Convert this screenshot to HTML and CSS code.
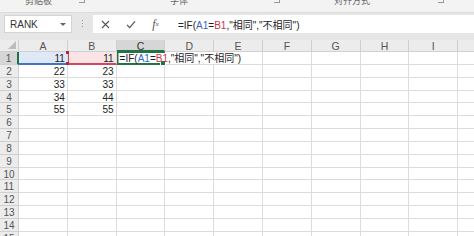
FILE: index.html
```html
<!DOCTYPE html>
<html lang="zh-CN">
<head>
  <meta charset="UTF-8">
  <meta name="viewport" content="width=device-width, initial-scale=1.0">
  <title>IF 相同 / 不相同</title>
  <link rel="stylesheet" href="styles.css">
</head>
<body>
  <div class="ribbon">
    <div class="group g-clip"><span class="label">剪贴板</span><span class="launcher"></span></div>
    <div class="group g-font"><span class="label">字体</span><span class="launcher"></span></div>
    <div class="group g-align"><span class="label">对齐方式</span><span class="launcher"></span></div>
  </div>

  <div class="formula-bar">
    <div class="name-box"><span>RANK</span><span class="arrow"></span></div>
    <div class="grip"><i></i><i></i><i></i></div>
    <div class="input">
      <span class="tool">
        <svg width="9" height="9" viewBox="0 0 9 9"><path d="M1 1L8 8M8 1L1 8" stroke="#555" stroke-width="1.1"/></svg>
      </span>
      <span class="tool">
        <svg width="10" height="9" viewBox="0 0 10 9"><path d="M1 4.8L3.7 7.6L9 1.3" fill="none" stroke="#555" stroke-width="1.2"/></svg>
      </span>
      <span class="tool fx">f<sub>x</sub></span>
      <span class="formula">=IF(<span class="ref-a">A1</span>=<span class="ref-b">B1</span>,"相同","不相同")</span>
    </div>
  </div>

  <div class="sheet">
    <div class="row head">
      <div class="num corner"><svg width="8" height="8" viewBox="0 0 8 8"><path d="M8 0V8H0Z" fill="#bdbdbd"/></svg></div>
      <div class="cell">A</div><div class="cell">B</div><div class="cell sel">C</div><div class="cell">D</div><div class="cell">E</div>
      <div class="cell">F</div><div class="cell">G</div><div class="cell">H</div><div class="cell">I</div><div class="cell">J</div>
    </div>
    <div class="row">
      <div class="num sel">1</div>
      <div class="cell hl-a">11</div><div class="cell hl-b">11</div>
      <div class="cell active"><span class="edit">=IF(<span class="ref-a">A1</span>=<span class="ref-b">B1</span>,"相同","不相同")</span></div>
      <div class="cell spill"></div><div class="cell"></div><div class="cell"></div><div class="cell"></div><div class="cell"></div><div class="cell"></div><div class="cell"></div>
    </div>
    <div class="row">
      <div class="num">2</div>
      <div class="cell">22</div><div class="cell">23</div><div class="cell"></div><div class="cell"></div><div class="cell"></div>
      <div class="cell"></div><div class="cell"></div><div class="cell"></div><div class="cell"></div><div class="cell"></div>
    </div>
    <div class="row">
      <div class="num">3</div>
      <div class="cell">33</div><div class="cell">33</div><div class="cell"></div><div class="cell"></div><div class="cell"></div>
      <div class="cell"></div><div class="cell"></div><div class="cell"></div><div class="cell"></div><div class="cell"></div>
    </div>
    <div class="row">
      <div class="num">4</div>
      <div class="cell">34</div><div class="cell">44</div><div class="cell"></div><div class="cell"></div><div class="cell"></div>
      <div class="cell"></div><div class="cell"></div><div class="cell"></div><div class="cell"></div><div class="cell"></div>
    </div>
    <div class="row">
      <div class="num">5</div>
      <div class="cell">55</div><div class="cell">55</div><div class="cell"></div><div class="cell"></div><div class="cell"></div>
      <div class="cell"></div><div class="cell"></div><div class="cell"></div><div class="cell"></div><div class="cell"></div>
    </div>
    <div class="row">
      <div class="num">6</div>
      <div class="cell"></div><div class="cell"></div><div class="cell"></div><div class="cell"></div><div class="cell"></div>
      <div class="cell"></div><div class="cell"></div><div class="cell"></div><div class="cell"></div><div class="cell"></div>
    </div>
    <div class="row">
      <div class="num">7</div>
      <div class="cell"></div><div class="cell"></div><div class="cell"></div><div class="cell"></div><div class="cell"></div>
      <div class="cell"></div><div class="cell"></div><div class="cell"></div><div class="cell"></div><div class="cell"></div>
    </div>
    <div class="row">
      <div class="num">8</div>
      <div class="cell"></div><div class="cell"></div><div class="cell"></div><div class="cell"></div><div class="cell"></div>
      <div class="cell"></div><div class="cell"></div><div class="cell"></div><div class="cell"></div><div class="cell"></div>
    </div>
    <div class="row">
      <div class="num">9</div>
      <div class="cell"></div><div class="cell"></div><div class="cell"></div><div class="cell"></div><div class="cell"></div>
      <div class="cell"></div><div class="cell"></div><div class="cell"></div><div class="cell"></div><div class="cell"></div>
    </div>
    <div class="row">
      <div class="num">10</div>
      <div class="cell"></div><div class="cell"></div><div class="cell"></div><div class="cell"></div><div class="cell"></div>
      <div class="cell"></div><div class="cell"></div><div class="cell"></div><div class="cell"></div><div class="cell"></div>
    </div>
    <div class="row">
      <div class="num">11</div>
      <div class="cell"></div><div class="cell"></div><div class="cell"></div><div class="cell"></div><div class="cell"></div>
      <div class="cell"></div><div class="cell"></div><div class="cell"></div><div class="cell"></div><div class="cell"></div>
    </div>
    <div class="row">
      <div class="num">12</div>
      <div class="cell"></div><div class="cell"></div><div class="cell"></div><div class="cell"></div><div class="cell"></div>
      <div class="cell"></div><div class="cell"></div><div class="cell"></div><div class="cell"></div><div class="cell"></div>
    </div>
    <div class="row">
      <div class="num">13</div>
      <div class="cell"></div><div class="cell"></div><div class="cell"></div><div class="cell"></div><div class="cell"></div>
      <div class="cell"></div><div class="cell"></div><div class="cell"></div><div class="cell"></div><div class="cell"></div>
    </div>
    <div class="row">
      <div class="num">14</div>
      <div class="cell"></div><div class="cell"></div><div class="cell"></div><div class="cell"></div><div class="cell"></div>
      <div class="cell"></div><div class="cell"></div><div class="cell"></div><div class="cell"></div><div class="cell"></div>
    </div>
    <div class="row">
      <div class="num">15</div>
      <div class="cell"></div><div class="cell"></div><div class="cell"></div><div class="cell"></div><div class="cell"></div>
      <div class="cell"></div><div class="cell"></div><div class="cell"></div><div class="cell"></div><div class="cell"></div>
    </div>
  </div>
</body>
</html>
```

FILE: styles.css
```css
* {
  box-sizing: border-box;
}

body {
  margin: 0;
  width: 474px;
  height: 236px;
  overflow: hidden;
  background: #fff;
  color: #222;
  font-family: "Liberation Sans", "Noto Sans CJK SC", sans-serif;
}

/* ribbon group labels, cut off at the top */
.ribbon {
  display: flex;
  height: 13px;
  background: #f3f3f3;
  border-bottom: 1px solid #dcdcdc;
  overflow: hidden;
  font-size: 9px;
  color: #666;
}

.group {
  display: flex;
  align-items: flex-start;
}

.g-clip {
  width: 88px;
  padding-left: 25px;
}

.g-font {
  width: 195px;
  padding-left: 82px;
}

.g-align {
  width: 164px;
  padding-left: 51px;
}

.label {
  line-height: 9px;
  margin-top: -3px;
}

.launcher {
  margin-left: auto;
  margin-right: 3px;
  margin-top: -3px;
  width: 6px;
  height: 6px;
  border-right: 1px solid #999;
  border-bottom: 1px solid #999;
}

/* formula bar */
.formula-bar {
  display: flex;
  height: 27px;
  padding-top: 2px;
  background: #e6e6e6;
}

.name-box {
  display: flex;
  align-items: center;
  justify-content: space-between;
  margin-left: 4px;
  width: 68px;
  height: 18px;
  padding: 0 5px 0 5px;
  background: #fff;
  border: 1px solid #d4d4d4;
  font-size: 10px;
  color: #333;
}

.arrow {
  width: 0;
  height: 0;
  border-left: 3px solid transparent;
  border-right: 3px solid transparent;
  border-top: 3px solid #666;
}

.grip {
  display: flex;
  flex-direction: column;
  gap: 2px;
  margin: 5px 0 0 10px;
}

.grip i {
  display: block;
  width: 1px;
  height: 1px;
  background: #999;
}

.input {
  flex: 1;
  display: flex;
  align-items: center;
  height: 18px;
  margin-left: 10px;
  background: #fff;
}

.tool {
  display: flex;
  justify-content: center;
  width: 25px;
}

.fx {
  font-family: "Liberation Serif", serif;
  font-style: italic;
  font-size: 12px;
  line-height: 12px;
  color: #555;
}

.fx sub {
  font-size: 7px;
  vertical-align: -2px;
}

.formula {
  padding-left: 10px;
  font-size: 10px;
  white-space: nowrap;
}

.ref-a {
  color: #3a64c0;
}

.ref-b {
  color: #c9364b;
}

/* sheet */
.sheet {
  font-size: 10px;
}

.row {
  display: flex;
  height: 12.85px;
}

.row > div {
  flex: none;
  height: 100%;
  padding-top: 1px;
  border-right: 1px solid #dcdcdc;
  border-bottom: 1px solid #dcdcdc;
}

.row > .num {
  width: 19px;
  background: #ececec;
  border-color: #d0d0d0;
  text-align: center;
  color: #555;
  line-height: 12px;
}

.cell {
  width: 48.8px;
  padding-right: 2px;
  text-align: right;
  line-height: 12px;
  white-space: nowrap;
}

.head {
  height: 12px;
}

.head > .cell {
  background: #ececec;
  border-color: #d0d0d0;
  padding: 1px 0 0;
  text-align: center;
  color: #555;
  font-size: 10.5px;
  line-height: 11px;
}

.head > .corner {
  display: flex;
  align-items: flex-end;
  justify-content: flex-end;
  padding: 0 2px 2px 0;
}

.head > .sel {
  background: #d6d6d6;
  border-bottom: 2px solid #217346;
  color: #333;
}

.row > .num.sel {
  background: #d6d6d6;
  border-right: 2px solid #217346;
}

/* reference highlights while editing */
.hl-a {
  position: relative;
  background: #dfe8f6;
  border-bottom: 2px solid #4472c4 !important;
}

.hl-b {
  position: relative;
  background: #fbe4e6;
  border-bottom: 2px solid #d04a5c !important;
  box-shadow: inset 1px 0 0 #d04a5c;
}

.hl-b::before,
.hl-b::after {
  content: "";
  position: absolute;
  left: -2px;
  width: 3px;
  height: 3px;
  background: #b02a3e;
}

.hl-b::before {
  top: -1px;
}

.hl-b::after {
  bottom: -2px;
}

.active {
  position: relative;
  text-align: left;
  padding: 1px 0 0 3px;
  border-right: none !important;
  box-shadow: inset 0 1px 0 #217346, inset 1.5px 0 0 #217346;
  border-bottom: 2px solid #217346 !important;
}

.active::after {
  content: "";
  position: absolute;
  right: -1px;
  bottom: -3px;
  width: 4px;
  height: 4px;
  background: #217346;
  border: 1px solid #fff;
}

.edit {
  position: relative;
  z-index: 1;
}

.spill {
  border-right: none !important;
}
```
